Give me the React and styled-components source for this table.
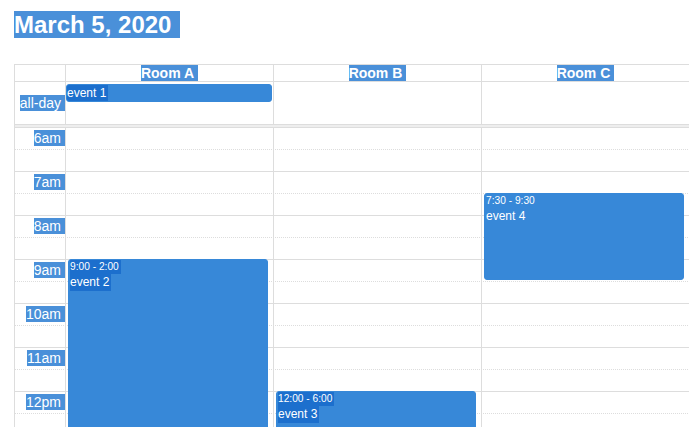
import styled, { createGlobalStyle } from 'styled-components';

const GlobalStyle = createGlobalStyle`
    html, body {
        margin: 0;
        padding: 0;
        overflow: hidden;
        background: #fff;
    }
    body {
        font-family: "Liberation Sans", Arial, sans-serif;
        font-size: 14px;
        color: #000;
    }
`

const resources = ['Room A', 'Room B', 'Room C'];

const hours = ['6am', '7am', '8am', '9am', '10am', '11am', '12pm'];

// slot index counts half hours from 6am
const events = [
    { room: 1, time: '9:00 - 2:00', title: 'event 2', start: 6, end: 16, selected: true },
    { room: 2, time: '12:00 - 6:00', title: 'event 3', start: 12, end: 24, selected: true },
    { room: 3, time: '7:30 - 9:30', title: 'event 4', start: 3, end: 7, selected: false },
]

const SLOT = 22;

const App = () => {
    return (
        <Page>
            <GlobalStyle />
            <Title><Highlight>March 5, 2020</Highlight></Title>

            <Calendar>
                <HeaderRow>
                    <HeaderCell />
                    {resources.map(r => (
                        <HeaderCell key={r}><Highlight>{r}</Highlight></HeaderCell>
                    ))}
                </HeaderRow>

                <AllDayRow>
                    <AxisCell $center><Highlight>all-day</Highlight></AxisCell>
                    <DayCell>
                        <AllDayEvent><DarkHighlight>event 1</DarkHighlight></AllDayEvent>
                    </DayCell>
                    <DayCell />
                    <DayCell />
                </AllDayRow>

                <Divider />

                <TimeGrid>
                    {hours.flatMap(h => [
                        <SlotRow key={h} $minor>
                            <AxisCell><AxisLabel>{h}</AxisLabel></AxisCell>
                            <SlotCell /><SlotCell /><SlotCell />
                        </SlotRow>,
                        <SlotRow key={h + '30'}>
                            <AxisCell />
                            <SlotCell /><SlotCell /><SlotCell />
                        </SlotRow>
                    ])}

                    <EventLayer>
                        <div />
                        {[1, 2, 3].map(col => (
                            <EventColumn key={col}>
                                {events.filter(e => e.room === col).map(e => (
                                    <TimedEvent
                                        key={e.title}
                                        style={{ top: e.start * SLOT - 1, height: (e.end - e.start) * SLOT - 1 }}
                                    >
                                        {e.selected ? (
                                            <>
                                                <EventTime><DarkHighlight>{e.time}</DarkHighlight></EventTime>
                                                <EventTitle><DarkHighlight>{e.title}</DarkHighlight></EventTitle>
                                            </>
                                        ) : (
                                            <>
                                                <EventTime>{e.time}</EventTime>
                                                <EventTitle>{e.title}</EventTitle>
                                            </>
                                        )}
                                    </TimedEvent>
                                ))}
                            </EventColumn>
                        ))}
                    </EventLayer>
                </TimeGrid>
            </Calendar>
        </Page>
    )
}

const Page = styled.div`
    padding: 11px 14px 0;
    height: 416px;
    overflow: hidden;
`

const Title = styled.h2`
    margin: 0 0 26px;
    font-size: 24px;
    font-weight: bold;
    line-height: 27px;
    color: #fff;
`

const Highlight = styled.span`
    display: inline-block;
    background: #4a90d9;
    color: #fff;
    padding-right: 4px;

    h2 & {
        padding-right: 9px;
    }
`

const DarkHighlight = styled.span`
    background: #1c6fcd;
    color: #fff;
    padding-right: 2px;
`

const Calendar = styled.div`
    width: 676px;
    border-top: 1px solid #ddd;
    border-left: 1px solid #ddd;
    box-sizing: border-box;
`

const columns = `51px 208px 208px 208px`;

const HeaderRow = styled.div`
    display: grid;
    grid-template-columns: ${columns};
    border-bottom: 1px solid #ddd;
`

const HeaderCell = styled.div`
    height: 16px;
    line-height: 16px;
    text-align: center;
    font-weight: bold;
    border-right: 1px solid #ddd;
    box-sizing: border-box;
`

const AllDayRow = styled.div`
    display: grid;
    grid-template-columns: ${columns};
    height: 42px;
`

const AxisCell = styled.div`
    display: flex;
    justify-content: flex-end;
    align-items: ${p => p.$center ? 'center' : 'flex-start'};
    border-right: 1px solid #ddd;
    box-sizing: border-box;
    line-height: 16px;
    white-space: nowrap;
`

const AxisLabel = styled(Highlight)`
    margin-top: 2px;
`

const DayCell = styled.div`
    border-right: 1px solid #ddd;
    box-sizing: border-box;
    padding: 2px 1px 0 0;
`

const AllDayEvent = styled.div`
    height: 16px;
    line-height: 16px;
    background: #3788d8;
    border: 1px solid #3788d8;
    border-radius: 3px;
    font-size: 12px;
    color: #fff;
    white-space: nowrap;
    overflow: hidden;

    span {
        display: inline-block;
        height: 16px;
    }
`

const Divider = styled.div`
    height: 2px;
    background: #eee;
    border-top: 1px solid #ddd;
    border-bottom: 1px solid #ddd;
`

const TimeGrid = styled.div`
    position: relative;
`

const SlotRow = styled.div`
    display: grid;
    grid-template-columns: ${columns};
    height: ${SLOT}px;
    box-sizing: border-box;
    border-bottom: 1px ${p => p.$minor ? 'dotted' : 'solid'} #ddd;
`

const SlotCell = styled.div`
    border-right: 1px solid #ddd;
`

const EventLayer = styled.div`
    position: absolute;
    inset: 0;
    display: grid;
    grid-template-columns: ${columns};
    pointer-events: none;
`

const EventColumn = styled.div`
    position: relative;
`

const TimedEvent = styled.div`
    position: absolute;
    left: 2px;
    right: 6px;
    box-sizing: border-box;
    background: #3788d8;
    border: 1px solid #3788d8;
    border-radius: 3px;
    padding: 0 1px;
    color: #fff;
    overflow: hidden;
`

const EventTime = styled.div`
    font-size: 10.2px;
    line-height: 14px;
    white-space: nowrap;

    span {
        display: inline-block;
        height: 14px;
    }
`

const EventTitle = styled.div`
    font-size: 12px;
    line-height: 17px;

    span {
        display: inline-block;
        height: 17px;
    }
`

export default App;
